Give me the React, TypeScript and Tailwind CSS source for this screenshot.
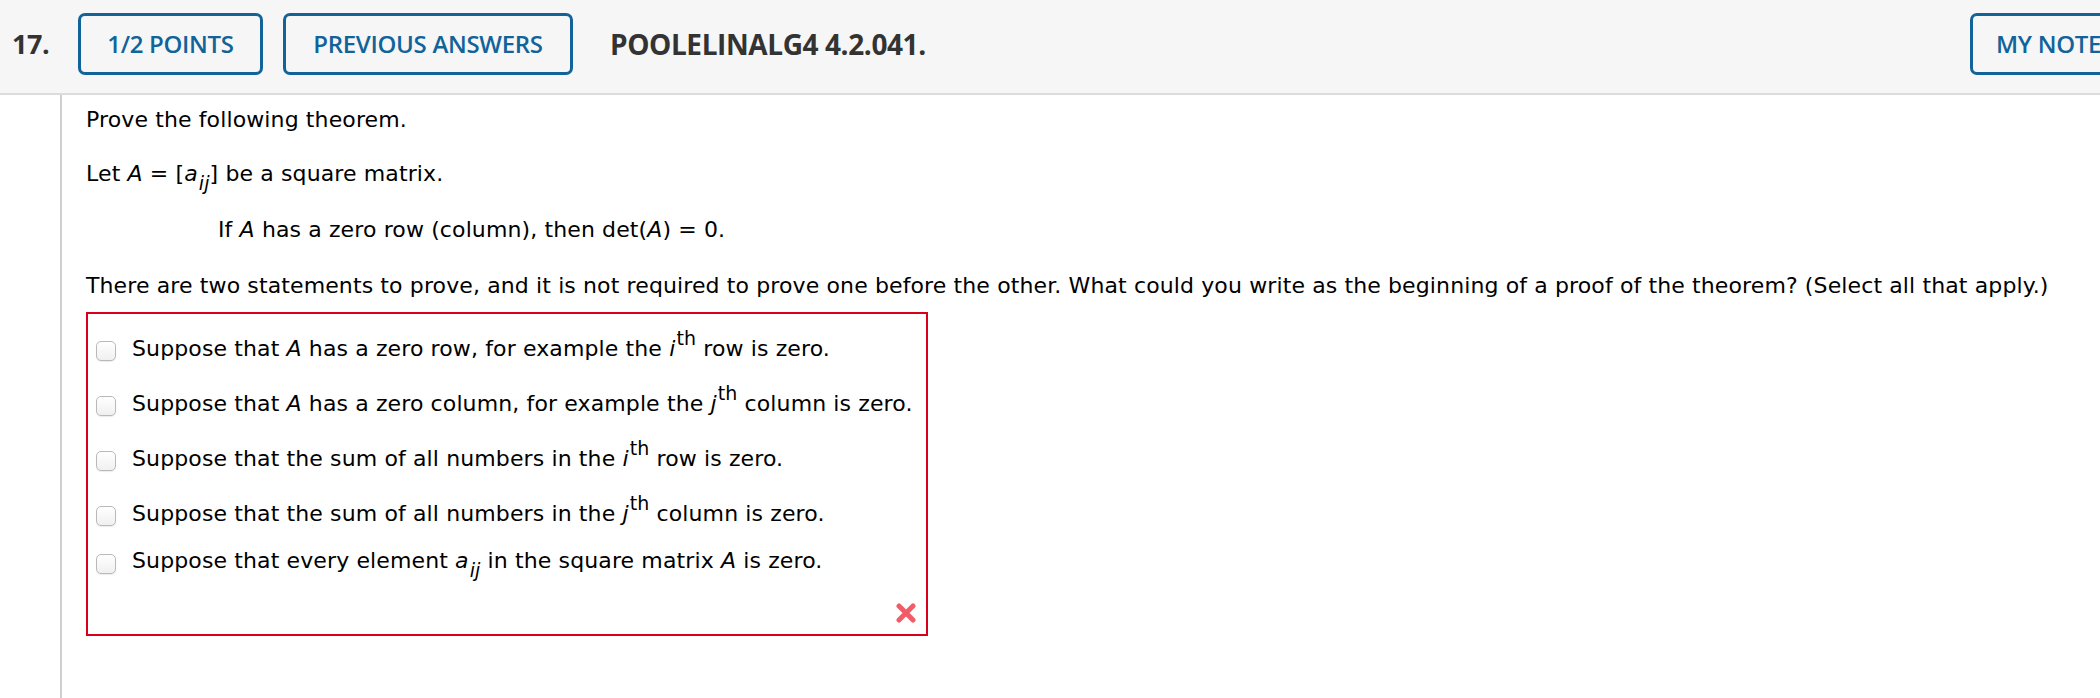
import { ReactNode } from 'react'

const Btn = ({ children, className = '' }: { children: ReactNode; className?: string }) => (
  <div
    className={`flex h-[62px] shrink-0 items-center justify-center rounded-[7px] border-[3px] border-[#11639a] text-[24px] font-semibold tracking-[-0.3px] text-[#11639a] ${className}`}
  >
    {children}
  </div>
)

const Sup = ({ children }: { children: ReactNode }) => (
  <sup className="relative top-[-11px] ml-[1px] text-[19px] not-italic">{children}</sup>
)

const Sub = ({ children }: { children: ReactNode }) => (
  <sub className="relative top-[9px] ml-[1px] text-[19px] italic">{children}</sub>
)

const Check = () => (
  <div className="mt-[5px] mr-[16px] h-[20px] w-[20px] shrink-0 rounded-[5px] border border-[#b9b9b9] bg-gradient-to-b from-white to-[#f0f0f0] shadow-[0_1px_1px_rgba(0,0,0,0.08)]" />
)

const options: ReactNode[] = [
  <>Suppose that <i>A</i> has a zero row, for example the <i>i</i><Sup>th</Sup> row is zero.</>,
  <>Suppose that <i>A</i> has a zero column, for example the <i>j</i><Sup>th</Sup> column is zero.</>,
  <>Suppose that the sum of all numbers in the <i>i</i><Sup>th</Sup> row is zero.</>,
  <>Suppose that the sum of all numbers in the <i>j</i><Sup>th</Sup> column is zero.</>,
  <>Suppose that every element <i>a</i><Sub>ij</Sub> in the square matrix <i>A</i> is zero.</>,
]

export default function App() {
  return (
    <div className="h-[698px] w-[2100px] overflow-hidden bg-white">
      {/* header */}
      <div className="flex h-[95px] items-center overflow-hidden border-b-2 border-[#dcdcdc] bg-[#f6f6f6] pb-[5px] pl-[12px] font-['Open_Sans',sans-serif]">
        <div className="w-[66px] shrink-0 text-[27px] font-bold tracking-[-0.5px] text-[#333]">17.</div>
        <Btn className="w-[185px]">1/2 POINTS</Btn>
        <Btn className="ml-[20px] w-[290px]">PREVIOUS ANSWERS</Btn>
        <div className="ml-[37px] text-[28px] font-bold tracking-[-0.4px] text-[#333]">POOLELINALG4 4.2.041.</div>
        <div className="flex-1" />
        <Btn className="mr-[-60px] w-[190px] justify-start pl-[23px]">MY NOTES</Btn>
      </div>

      {/* body */}
      <div className="flex h-[603px]">
        <div className="w-[62px] shrink-0 border-r-2 border-[#cfcfcf]" />
        <div className="pl-[24px] pt-[10px] font-['DejaVu_Sans',Verdana,sans-serif] text-[22px] tracking-[0.12px] text-black">
          <p className="leading-[30px]">Prove the following theorem.</p>
          <p className="mt-[24px] leading-[30px]">
            Let <i>A</i> = [<i>a</i><Sub>ij</Sub>] be a square matrix.
          </p>
          <p className="mt-[26px] pl-[132px] leading-[30px]">
            If <i>A</i> has a zero row (column), then det(<i>A</i>) = 0.
          </p>
          <p className="mt-[26px] leading-[30px]">
            There are two statements to prove, and it is not required to prove one before the other. What could you write as the beginning of a proof of the theorem? (Select all that apply.)
          </p>

          <div className="mt-[11px] w-[842px] border-2 border-[#d9001b] pl-[8px] pr-[9px] pt-[7px] pb-[11px]">
            {options.map((o, i) => (
              <div key={i} className={`flex items-center ${i === 4 ? 'h-[40px]' : 'h-[55px]'}`}>
                <Check />
                <span className="leading-[30px]">{o}</span>
              </div>
            ))}
            <div className="mt-[22px] flex justify-end">
              <svg width="22" height="20" viewBox="0 0 22 20">
                <path d="M4 3 L18 17 M18 3 L4 17" stroke="#f25c66" strokeWidth="5" strokeLinecap="round" />
              </svg>
            </div>
          </div>
        </div>
      </div>
    </div>
  )
}
